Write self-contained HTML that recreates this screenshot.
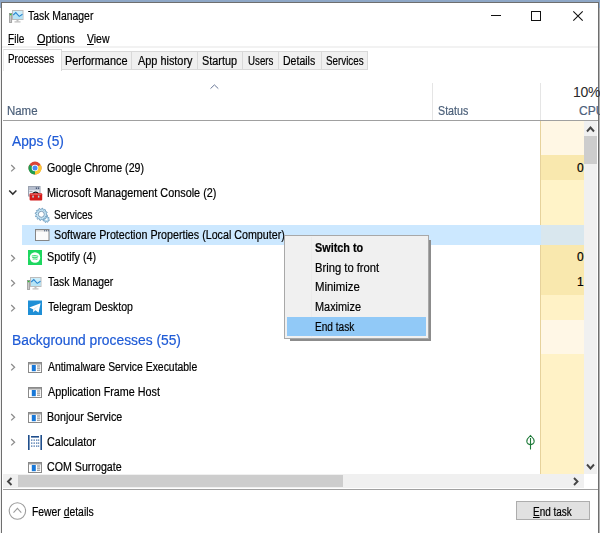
<!DOCTYPE html>
<html><head><meta charset="utf-8">
<style>
*{margin:0;padding:0;box-sizing:border-box}
html,body{width:600px;height:533px;overflow:hidden;background:#fff}
body{position:relative;font-family:"Liberation Sans",sans-serif;font-size:12px;color:#000}
.a{position:absolute}
.t{position:absolute;white-space:nowrap;line-height:14px;transform-origin:0 0;-webkit-text-stroke:0.2px currentColor}
.u{text-decoration:underline;text-underline-offset:1px}
.g{font-size:14px;color:#1f5bd6;line-height:16px}
</style></head><body>
<!-- outer frame -->
<div class="a" style="left:0;top:0;width:600px;height:2px;background:#8ea7c6"></div>
<div class="a" style="left:0;top:0;width:1px;height:8px;background:#8ea7c6"></div>
<div class="a" style="left:0;top:8px;width:1px;height:525px;background:#f0f0f0"></div>
<div class="a" style="left:599px;top:0;width:1px;height:8px;background:#8ea7c6"></div>
<div class="a" style="left:599px;top:8px;width:1px;height:525px;background:#b4b4b4"></div>
<div class="a" style="left:1px;top:2px;width:598px;height:1px;background:#6e6e6e"></div>
<div class="a" style="left:1px;top:2px;width:1px;height:531px;background:#6e6e6e"></div>
<div class="a" style="left:598px;top:2px;width:1px;height:531px;background:#6e6e6e"></div>

<!-- title -->
<svg class="a" style="left:9px;top:10px" width="15" height="13" viewBox="0 0 15 13">
  <rect x="3.5" y="0.5" width="10.5" height="9" fill="#cdeefa" stroke="#bcbcbc"/>
  <path d="M4 5 L6.5 2.8 L10 7 L13.5 4.5 L13.5 9 L4 9 Z" fill="#b6e4f6"/>
  <polyline points="4.2,5 6.8,2.6 10.2,6.4 13.5,4.2" fill="none" stroke="#2a86d0" stroke-width="1.1"/>
  <rect x="7.5" y="9.5" width="2" height="2" fill="#bdbdbd"/>
  <rect x="5.5" y="11.3" width="6" height="1.2" fill="#bdbdbd"/>
  <rect x="0.5" y="3.5" width="2.2" height="9" fill="#c8c8c8" stroke="#8c8c8c" stroke-width="0.7"/>
  <rect x="0.8" y="3.8" width="1.6" height="1.4" fill="#2cbf2f"/>
</svg>
<div class="t" style="left:28.30px;top:9px;transform:scaleX(0.867)">Task Manager</div>
<!-- window controls -->
<div class="a" style="left:491px;top:15px;width:10px;height:1px;background:#111"></div>
<div class="a" style="left:531px;top:11px;width:10px;height:10px;border:1px solid #111"></div>
<svg class="a" style="left:572px;top:10px" width="12" height="12" viewBox="0 0 12 12">
  <path d="M1.3 1.3L10.7 10.7M10.7 1.3L1.3 10.7" stroke="#111" stroke-width="1.1"/>
</svg>

<!-- menu -->
<div class="t" style="left:8.40px;top:32px;transform:scaleX(0.842)"><span class="u">F</span>ile</div>
<div class="t" style="left:37.00px;top:32px;transform:scaleX(0.912)"><span class="u">O</span>ptions</div>
<div class="t" style="left:87.00px;top:32px;transform:scaleX(0.869)"><span class="u">V</span>iew</div>
<div class="a" style="left:2px;top:46px;width:596px;height:2px;background:#f2f2f2"></div>

<!-- tabs -->
<div class="a" style="left:2px;top:69px;width:596px;height:1px;background:#ffffff"></div>
<div class="a" style="left:61px;top:51px;width:71px;height:19px;background:#f0f0f0;border:1px solid #d9d9d9"></div>
<div class="a" style="left:132px;top:51px;width:66px;height:19px;background:#f0f0f0;border:1px solid #d9d9d9;border-left:0"></div>
<div class="a" style="left:198px;top:51px;width:45px;height:19px;background:#f0f0f0;border:1px solid #d9d9d9;border-left:0"></div>
<div class="a" style="left:243px;top:51px;width:36px;height:19px;background:#f0f0f0;border:1px solid #d9d9d9;border-left:0"></div>
<div class="a" style="left:279px;top:51px;width:43px;height:19px;background:#f0f0f0;border:1px solid #d9d9d9;border-left:0"></div>
<div class="a" style="left:322px;top:51px;width:46px;height:19px;background:#f0f0f0;border:1px solid #d9d9d9;border-left:0"></div>
<div class="a" style="left:3px;top:49px;width:59px;height:22px;background:#fff;border:1px solid #d9d9d9;border-left-color:#ececec;border-bottom:0"></div>
<div class="t" style="left:8.47px;top:52px;transform:scaleX(0.825)">Processes</div>
<div class="t" style="left:65.09px;top:54px;transform:scaleX(0.910)">Performance</div>
<div class="t" style="left:137.50px;top:54px;transform:scaleX(0.908)">App history</div>
<div class="t" style="left:202.09px;top:54px;transform:scaleX(0.905)">Startup</div>
<div class="t" style="left:247.69px;top:54px;transform:scaleX(0.810)">Users</div>
<div class="t" style="left:283.12px;top:54px;transform:scaleX(0.877)">Details</div>
<div class="t" style="left:325.58px;top:54px;transform:scaleX(0.818)">Services</div>

<!-- column headers -->
<svg class="a" style="left:209px;top:83px" width="11" height="7" viewBox="0 0 11 7">
  <path d="M1.5 5.6L5.4 1.9L9.3 5.6" fill="none" stroke="#6a7898" stroke-width="1"/>
</svg>
<div class="t" style="left:7.45px;top:104px;color:#4c607a;transform:scaleX(0.953)">Name</div>
<div class="a" style="left:432px;top:83px;width:1px;height:37px;background:#e5e5e5"></div>
<div class="t" style="left:437.61px;top:104px;color:#4c607a;transform:scaleX(0.891)">Status</div>
<div class="a" style="left:540px;top:83px;width:1px;height:37px;background:#e5e5e5"></div>
<div class="t" style="left:573px;top:85px;font-size:14px;letter-spacing:-0.3px;color:#2a2a2a;-webkit-text-stroke:0">10%</div>
<div class="t" style="left:579px;top:104px;color:#4c607a">CPU</div>
<div class="a" style="left:3px;top:120px;width:595px;height:1px;background:#a0a0a0"></div>

<!-- LIST -->
<div class="a" style="left:0;top:121px;width:584px;height:353px;overflow:hidden">
<div class="a" style="left:0;top:-121px;width:584px;height:600px">
  <!-- CPU column backgrounds -->
  <div class="a" style="left:541px;top:121px;width:43px;height:34px;background:#fff7e4"></div>
  <div class="a" style="left:541px;top:155px;width:43px;height:25px;background:#f9e8ae"></div>
  <div class="a" style="left:541px;top:180px;width:43px;height:45px;background:#fff3c8"></div>
  <div class="a" style="left:541px;top:225px;width:43px;height:20px;background:#d9e7ee"></div>
  <div class="a" style="left:541px;top:245px;width:43px;height:50px;background:#f9e8ae"></div>
  <div class="a" style="left:541px;top:295px;width:43px;height:25px;background:#fff2c6"></div>
  <div class="a" style="left:541px;top:320px;width:43px;height:34px;background:#fff7e6"></div>
  <div class="a" style="left:541px;top:354px;width:43px;height:130px;background:#fff2c6"></div>
  <div class="a" style="left:540px;top:121px;width:1px;height:360px;background:#e6d29c"></div>
  <!-- selection row -->
  <div class="a" style="left:22px;top:225px;width:519px;height:20px;background:#cce8ff"></div>

  <!-- group headers -->
  <div class="t g" style="left:12.00px;top:133px;transform:scaleX(0.981)">Apps (5)</div>
  <div class="t g" style="left:11.51px;top:332px;transform:scaleX(0.987)">Background processes (55)</div>

  <!-- chevrons -->
  <svg class="a" style="left:10px;top:164px" width="7" height="8" viewBox="0 0 7 8"><path d="M1.2 1L4.6 4.2L1.2 7.4" fill="none" stroke="#8c8c8c" stroke-width="1.25"/></svg>
  <svg class="a" style="left:8px;top:189px" width="10" height="7" viewBox="0 0 10 7"><path d="M1.2 1.5L4.8 5.1L8.4 1.5" fill="none" stroke="#303030" stroke-width="1.5"/></svg>
  <svg class="a" style="left:10px;top:254px" width="7" height="8" viewBox="0 0 7 8"><path d="M1.2 1L4.6 4.2L1.2 7.4" fill="none" stroke="#8c8c8c" stroke-width="1.25"/></svg>
  <svg class="a" style="left:10px;top:279px" width="7" height="8" viewBox="0 0 7 8"><path d="M1.2 1L4.6 4.2L1.2 7.4" fill="none" stroke="#8c8c8c" stroke-width="1.25"/></svg>
  <svg class="a" style="left:10px;top:304px" width="7" height="8" viewBox="0 0 7 8"><path d="M1.2 1L4.6 4.2L1.2 7.4" fill="none" stroke="#8c8c8c" stroke-width="1.25"/></svg>
  <svg class="a" style="left:10px;top:363px" width="7" height="8" viewBox="0 0 7 8"><path d="M1.2 1L4.6 4.2L1.2 7.4" fill="none" stroke="#8c8c8c" stroke-width="1.25"/></svg>
  <svg class="a" style="left:10px;top:413px" width="7" height="8" viewBox="0 0 7 8"><path d="M1.2 1L4.6 4.2L1.2 7.4" fill="none" stroke="#8c8c8c" stroke-width="1.25"/></svg>
  <svg class="a" style="left:10px;top:438px" width="7" height="8" viewBox="0 0 7 8"><path d="M1.2 1L4.6 4.2L1.2 7.4" fill="none" stroke="#8c8c8c" stroke-width="1.25"/></svg>

  <!-- row texts -->
  <div class="t" style="left:46.61px;top:161px;transform:scaleX(0.887)">Google Chrome (29)</div>
  <div class="t" style="left:46.60px;top:186px;transform:scaleX(0.904)">Microsoft Management Console (2)</div>
  <div class="t" style="left:53.96px;top:208px;transform:scaleX(0.838)">Services</div>
  <div class="t" style="left:53.91px;top:228px;transform:scaleX(0.892)">Software Protection Properties (Local Computer)</div>
  <div class="t" style="left:46.80px;top:250px;transform:scaleX(0.898)">Spotify (4)</div>
  <div class="t" style="left:47.60px;top:275px;transform:scaleX(0.865)">Task Manager</div>
  <div class="t" style="left:47.70px;top:300px;transform:scaleX(0.878)">Telegram Desktop</div>
  <div class="t" style="left:47.50px;top:360px;transform:scaleX(0.867)">Antimalware Service Executable</div>
  <div class="t" style="left:47.50px;top:385px;transform:scaleX(0.897)">Application Frame Host</div>
  <div class="t" style="left:46.61px;top:410px;transform:scaleX(0.888)">Bonjour Service</div>
  <div class="t" style="left:46.59px;top:435px;transform:scaleX(0.906)">Calculator</div>
  <div class="t" style="left:46.61px;top:460px;transform:scaleX(0.888)">COM Surrogate</div>

  <!-- cpu values -->
  <div class="t" style="left:577px;top:161px">0</div>
  <div class="t" style="left:577px;top:250px">0</div>
  <div class="t" style="left:577px;top:275px">1</div>

  <!-- icons -->
  <!-- chrome -->
  <svg class="a" style="left:28px;top:160.5px" width="14" height="14" viewBox="0 0 14 14">
    <circle cx="7" cy="7" r="6.5" fill="#db4437"/>
    <path d="M7 7 L12.63 3.75 A6.5 6.5 0 0 1 7 13.5 Z" fill="#fcc934"/>
    <path d="M7 7 L7 13.5 A6.5 6.5 0 0 1 1.37 3.75 Z" fill="#1e9e4f"/>
    <circle cx="7" cy="7" r="3.3" fill="#fff"/>
    <circle cx="7" cy="7" r="2.5" fill="#4a8af4"/>
  </svg>
  <!-- mmc -->
  <svg class="a" style="left:28px;top:186px" width="15" height="15" viewBox="0 0 15 15">
    <rect x="0.5" y="0.5" width="11.5" height="9.5" fill="#e9edf4" stroke="#9aa2b0"/>
    <rect x="1" y="1" width="10.5" height="3.2" fill="#b6bece"/>
    <rect x="7.8" y="1.4" width="1.3" height="1.6" fill="#4a5a78"/><rect x="9.9" y="1.4" width="1.3" height="1.6" fill="#4a5a78"/>
    <rect x="1.5" y="5.2" width="3" height="0.8" fill="#8a92a2"/>
    <path d="M4.6 7.6 Q7.6 4.6 10.6 7.6" fill="none" stroke="#111" stroke-width="1.3"/>
    <rect x="1.6" y="7.2" width="12.6" height="7.3" rx="1" fill="#d41a1a"/>
    <rect x="2.4" y="7.9" width="11" height="0.9" fill="#e86060"/>
    <rect x="4.3" y="9.6" width="1.5" height="2" fill="#b0dce6"/><rect x="9.9" y="9.6" width="1.5" height="2" fill="#b0dce6"/>
  </svg>
  <!-- services gear -->
  <svg class="a" style="left:34px;top:207px" width="17" height="17" viewBox="0 0 17 17">
    <path d="M14.70 12.30 L15.46 12.80 L15.26 13.52 L14.35 13.55 L14.00 14.00 L14.18 14.89 L13.52 15.26 L12.86 14.63 L12.30 14.70 L11.80 15.46 L11.08 15.26 L11.05 14.35 L10.60 14.00 L9.71 14.18 L9.34 13.52 L9.97 12.86 L9.90 12.30 L9.14 11.80 L9.34 11.08 L10.25 11.05 L10.60 10.60 L10.42 9.71 L11.08 9.34 L11.74 9.97 L12.30 9.90 L12.80 9.14 L13.52 9.34 L13.55 10.25 L14.00 10.60 L14.89 10.42 L15.26 11.08 L14.63 11.74Z" fill="#b8dcf0" stroke="#5f8fb4" stroke-width="0.7"/>
    <circle cx="12.3" cy="12.3" r="1" fill="#fff"/>
    <path d="M12.20 7.30 L13.37 7.94 L13.19 8.88 L11.87 9.06 L11.54 9.75 L12.24 10.89 L11.61 11.61 L10.38 11.11 L9.75 11.54 L9.78 12.87 L8.88 13.19 L8.07 12.14 L7.30 12.20 L6.66 13.37 L5.72 13.19 L5.54 11.87 L4.85 11.54 L3.71 12.24 L2.99 11.61 L3.49 10.38 L3.06 9.75 L1.73 9.78 L1.41 8.88 L2.46 8.07 L2.40 7.30 L1.23 6.66 L1.41 5.72 L2.73 5.54 L3.06 4.85 L2.36 3.71 L2.99 2.99 L4.22 3.49 L4.85 3.06 L4.82 1.73 L5.72 1.41 L6.53 2.46 L7.30 2.40 L7.94 1.23 L8.88 1.41 L9.06 2.73 L9.75 3.06 L10.89 2.36 L11.61 2.99 L11.11 4.22 L11.54 4.85 L12.87 4.82 L13.19 5.72 L12.14 6.53Z" fill="#c6e6f6" stroke="#5f8fb4" stroke-width="0.8"/>
    <circle cx="7.3" cy="7.3" r="3" fill="#fff" stroke="#6a8aa8" stroke-width="0.8"/>
  </svg>
  <!-- window icon (software protection) -->
  <svg class="a" style="left:35px;top:229px" width="15" height="12" viewBox="0 0 15 12">
    <rect x="0.5" y="0.5" width="13.5" height="11" fill="#fbfbfb" stroke="#858585"/>
    <rect x="1" y="1" width="12.5" height="1.5" fill="#d8d8d8"/>
    <rect x="9" y="1" width="1.2" height="1.4" fill="#6b7a90"/><rect x="11" y="1" width="1.2" height="1.4" fill="#6b7a90"/><rect x="13" y="1" width="1" height="1.4" fill="#6b7a90"/>
  </svg>
  <!-- spotify -->
  <svg class="a" style="left:28px;top:250px" width="14" height="15" viewBox="0 0 14 15">
    <rect x="0" y="0" width="14" height="15" fill="#1ed760"/>
    <circle cx="7" cy="7.5" r="5.2" fill="#fff"/>
    <path d="M3.8 6 Q7 5 10.2 6.3 M4.2 7.6 Q7 6.8 9.8 7.9 M4.7 9.1 Q7 8.5 9.3 9.4" fill="none" stroke="#1ed760" stroke-width="0.9"/>
  </svg>
  <!-- task manager -->
  <svg class="a" style="left:27px;top:277px" width="15" height="13" viewBox="0 0 15 13">
  <rect x="3.5" y="0.5" width="10.5" height="9" fill="#cdeefa" stroke="#bcbcbc"/>
  <path d="M4 5 L6.5 2.8 L10 7 L13.5 4.5 L13.5 9 L4 9 Z" fill="#b6e4f6"/>
  <polyline points="4.2,5 6.8,2.6 10.2,6.4 13.5,4.2" fill="none" stroke="#2a86d0" stroke-width="1.1"/>
  <rect x="7.5" y="9.5" width="2" height="2" fill="#bdbdbd"/>
  <rect x="5.5" y="11.3" width="6" height="1.2" fill="#bdbdbd"/>
  <rect x="0.5" y="3.5" width="2.2" height="9" fill="#c8c8c8" stroke="#8c8c8c" stroke-width="0.7"/>
  <rect x="0.8" y="3.8" width="1.6" height="1.4" fill="#2cbf2f"/>
</svg>
  <!-- telegram -->
  <svg class="a" style="left:28px;top:300px" width="14" height="15" viewBox="0 0 14 15">
    <rect x="0" y="0.5" width="14" height="14.5" fill="#1f8fd6"/>
    <path d="M1.3 7.6 L12.6 3.2 L10.6 12.6 L7.2 10.2 L5.4 12.2 L5 9.2 Z" fill="#fff"/>
    <path d="M5 9.2 L10.8 5.2 L6.4 9.6 L5.4 12.2" fill="#d6e8f5"/>
  </svg>
  <!-- generic app icons -->
  <svg class="a" style="left:28px;top:362px" width="14" height="11" viewBox="0 0 14 11">
    <rect x="0.5" y="0.5" width="13" height="10" fill="#fff" stroke="#8a8a8a"/><rect x="1" y="1" width="12" height="1.5" fill="#9c9c9c"/>
    <rect x="3.8" y="3" width="4" height="6.2" fill="#1878d8"/>
    <rect x="9" y="3.5" width="3.2" height="1" fill="#7a7a7a"/><rect x="9" y="5.6" width="3.2" height="1" fill="#7a7a7a"/><rect x="9" y="7.7" width="3.2" height="1" fill="#7a7a7a"/>
  </svg>
  <svg class="a" style="left:28px;top:387px" width="14" height="11" viewBox="0 0 14 11">
    <rect x="0.5" y="0.5" width="13" height="10" fill="#fff" stroke="#8a8a8a"/><rect x="1" y="1" width="12" height="1.5" fill="#9c9c9c"/>
    <rect x="3.8" y="3" width="4" height="6.2" fill="#1878d8"/>
    <rect x="9" y="3.5" width="3.2" height="1" fill="#7a7a7a"/><rect x="9" y="5.6" width="3.2" height="1" fill="#7a7a7a"/><rect x="9" y="7.7" width="3.2" height="1" fill="#7a7a7a"/>
  </svg>
  <svg class="a" style="left:28px;top:412px" width="14" height="11" viewBox="0 0 14 11">
    <rect x="0.5" y="0.5" width="13" height="10" fill="#fff" stroke="#8a8a8a"/><rect x="1" y="1" width="12" height="1.5" fill="#9c9c9c"/>
    <rect x="3.8" y="3" width="4" height="6.2" fill="#1878d8"/>
    <rect x="9" y="3.5" width="3.2" height="1" fill="#7a7a7a"/><rect x="9" y="5.6" width="3.2" height="1" fill="#7a7a7a"/><rect x="9" y="7.7" width="3.2" height="1" fill="#7a7a7a"/>
  </svg>
  <svg class="a" style="left:28px;top:462px" width="14" height="11" viewBox="0 0 14 11">
    <rect x="0.5" y="0.5" width="13" height="10" fill="#fff" stroke="#8a8a8a"/><rect x="1" y="1" width="12" height="1.5" fill="#9c9c9c"/>
    <rect x="3.8" y="3" width="4" height="6.2" fill="#1878d8"/>
    <rect x="9" y="3.5" width="3.2" height="1" fill="#7a7a7a"/><rect x="9" y="5.6" width="3.2" height="1" fill="#7a7a7a"/><rect x="9" y="7.7" width="3.2" height="1" fill="#7a7a7a"/>
  </svg>
  <!-- calculator -->
  <svg class="a" style="left:28px;top:435px" width="14" height="15" viewBox="0 0 14 15">
    <rect x="0" y="0" width="1.6" height="15" fill="#1f4e8c"/>
    <rect x="12.4" y="0" width="1.6" height="15" fill="#1f4e8c"/>
    <rect x="3" y="1" width="8" height="1.6" fill="#1f4e8c"/>
    <g fill="#3a68a4">
      <rect x="3" y="4.5" width="1.4" height="1.2"/><rect x="5.5" y="4.5" width="1.4" height="1.2"/><rect x="8" y="4.5" width="1.4" height="1.2"/><rect x="10" y="4.5" width="1.2" height="1.2"/>
      <rect x="3" y="7.5" width="1.4" height="1.2"/><rect x="5.5" y="7.5" width="1.4" height="1.2"/><rect x="8" y="7.5" width="1.4" height="1.2"/><rect x="10" y="7.5" width="1.2" height="1.2"/>
      <rect x="3" y="10.5" width="1.4" height="1.2"/><rect x="5.5" y="10.5" width="1.4" height="1.2"/><rect x="8" y="10.5" width="1.4" height="1.2"/><rect x="10" y="10.5" width="1.2" height="1.2"/>
    </g>
  </svg>
  <!-- leaf -->
  <svg class="a" style="left:525px;top:434px" width="11" height="17" viewBox="0 0 11 17">
    <path d="M5.5 1.5 L8.6 5 Q10 8 8 9.8 Q5.5 11.5 3 9.8 Q1 8 2.4 5 Z" fill="none" stroke="#1f7a3a" stroke-width="1.1"/>
    <path d="M5.5 4 L5.5 15.5" stroke="#1f7a3a" stroke-width="1.1"/>
  </svg>
</div>
</div>

<!-- vertical scrollbar -->
<div class="a" style="left:584px;top:121px;width:13px;height:353px;background:#f0f0f0"></div>
<svg class="a" style="left:584px;top:124px" width="13" height="10" viewBox="0 0 13 10"><path d="M3 7.5L6.5 3.5L10 7.5" fill="none" stroke="#454545" stroke-width="1.9"/></svg>
<div class="a" style="left:584px;top:136px;width:13px;height:28px;background:#cdcdcd"></div>
<svg class="a" style="left:584px;top:462px" width="13" height="10" viewBox="0 0 13 10"><path d="M3 2.5L6.5 6.5L10 2.5" fill="none" stroke="#454545" stroke-width="1.9"/></svg>
<!-- horizontal scrollbar -->
<div class="a" style="left:3px;top:474px;width:581px;height:14px;background:#f0f0f0"></div>
<div class="a" style="left:18px;top:475px;width:325px;height:12px;background:#cdcdcd"></div>
<svg class="a" style="left:4px;top:475px" width="10" height="12" viewBox="0 0 10 12"><path d="M7.5 3L4 6.5L7.5 10" fill="none" stroke="#454545" stroke-width="1.9"/></svg>
<svg class="a" style="left:571px;top:475px" width="10" height="12" viewBox="0 0 10 12"><path d="M3 3L6.5 6.5L3 10" fill="none" stroke="#454545" stroke-width="1.9"/></svg>
<div class="a" style="left:584px;top:474px;width:13px;height:14px;background:#fff"></div>

<!-- bottom -->
<div class="a" style="left:3px;top:489px;width:595px;height:1px;background:#a0a0a0"></div>
<svg class="a" style="left:8px;top:502px" width="19" height="19" viewBox="0 0 19 19">
  <circle cx="9.4" cy="9" r="8.2" fill="none" stroke="#9c9c9c" stroke-width="1.1"/>
  <path d="M5.5 10.6L9.4 6.4L13.3 10.6" fill="none" stroke="#9c9c9c" stroke-width="1.1"/>
</svg>
<div class="t" style="left:31.64px;top:505px;transform:scaleX(0.864)">Fewer <span class="u">d</span>etails</div>
<div class="a" style="left:516px;top:501px;width:74px;height:19px;background:#e1e1e1;border:1px solid #adadad"></div>
<div class="t" style="left:533.20px;top:505px;transform:scaleX(0.830)"><span class="u">E</span>nd task</div>

<!-- context menu -->
<div class="a" style="left:429px;top:240px;width:2px;height:101px;background:#8c8c8c;filter:blur(0.6px)"></div>
<div class="a" style="left:290px;top:339px;width:141px;height:2px;background:#8c8c8c;filter:blur(0.6px)"></div>
<div class="a" style="left:284px;top:235px;width:145px;height:104px;background:#f0f0f0;border:1px solid #a8a8a8"></div>
<div class="a" style="left:311px;top:237px;width:1px;height:100px;background:#ebebeb"></div>
<div class="a" style="left:287px;top:317px;width:139px;height:19px;background:#91c9f7"></div>
<div class="t" style="left:314.60px;top:241px;font-weight:bold;transform:scaleX(0.904)">Switch to</div>
<div class="t" style="left:314.57px;top:261px;transform:scaleX(0.934)">Bring to front</div>
<div class="t" style="left:314.55px;top:280px;transform:scaleX(0.948)">Minimize</div>
<div class="t" style="left:314.59px;top:300px;transform:scaleX(0.908)">Maximize</div>
<div class="t" style="left:314.96px;top:320px;transform:scaleX(0.843)">End task</div>

</body></html>
